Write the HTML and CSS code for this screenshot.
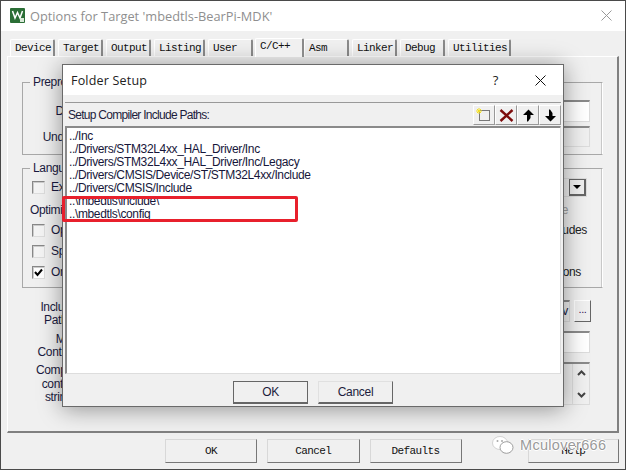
FILE: index.html
```html
<!DOCTYPE html>
<html lang="en">
<head>
<meta charset="utf-8">
<title>Options for Target</title>
<link rel="stylesheet" href="styles.css">
</head>
<body>
<div class="window">
  <header class="titlebar">
    <svg class="app-icon" width="15" height="15" viewBox="0 0 15 15">
      <rect width="15" height="15" rx="1" fill="#2b6e36"/>
      <path d="M2.500 3 L5 10 L7.500 4.500 L10 10 L12.500 3" fill="none" stroke="#fff" stroke-width="1.500"/>
      <rect x="10" y="10" width="4" height="4" fill="#d8e8d8"/>
    </svg>
    <span class="title-text">Options for Target 'mbedtls-BearPi-MDK'</span>
    <svg class="close-back" width="11" height="11" viewBox="0 0 11 11"><path d="M0.5 0.5 L10.5 10.5 M10.5 0.5 L0.5 10.5" stroke="#999" fill="none"/></svg>
  </header>
  <div class="main">
    <nav class="tabs">
      <span class="tab">Device</span>
      <span class="tab">Target</span>
      <span class="tab">Output</span>
      <span class="tab">Listing</span>
      <span class="tab tab-user">User</span>
      <span class="tab tab-active">C/C++</span>
      <span class="tab">Asm</span>
      <span class="tab">Linker</span>
      <span class="tab">Debug</span>
      <span class="tab">Utilities</span>
    </nav>
    <section class="panel">
      <fieldset class="group group-pre">
        <legend>Preprocessor Symbols</legend>
        <div class="field-grid">
          <span class="lbl">Define:</span><span class="field field-white"></span>
          <span class="lbl">Undefine:</span><span class="field"></span>
        </div>
      </fieldset>
      <fieldset class="group group-lang">
        <legend>Language / Code Generation</legend>
        <div class="check-row row-first"><span class="check"></span><span>Execute-only Code</span><span class="push"></span><span class="combo"><span class="combo-btn"></span></span></div>
        <div class="check-row plain"><span>Optimization:</span><span class="push"></span><span class="muted">Warnings: e</span></div>
        <div class="check-row"><span class="check"></span><span>Optimize for Time</span><span class="push"></span><span class="right-text">No Auto Includes</span></div>
        <div class="check-row"><span class="check"></span><span>Split Load and Store Multiple</span></div>
        <div class="check-row"><span class="check check-on"><svg width="9" height="9" viewBox="0 0 9 9"><path d="M1 4 L3.5 7 L8 1.5" fill="none" stroke="#000" stroke-width="2"/></svg></span><span>One ELF Section per Function</span><span class="push"></span><span class="right-text ext">GNU extensions</span></div>
      </fieldset>
      <div class="paths">
        <span class="plabel l1">Include<br>Paths</span>
        <div class="path-row"><span class="field field-v">v</span><span class="browse">...</span></div>
        <span class="plabel l2">&nbsp;&nbsp;&nbsp;&nbsp;&nbsp;&nbsp;Misc<br>Controls</span>
        <span class="field field-white misc"></span>
        <span class="plabel l3">Compiler<br>control<br>string</span>
        <div class="field ctrl"><span class="scroll"><svg width="9" height="6" viewBox="0 0 9 6"><path d="M1 5 L4.500 1.500 L8 5" fill="none" stroke="#444" stroke-width="2"/></svg><svg width="9" height="6" viewBox="0 0 9 6"><path d="M1 1 L4.500 4.500 L8 1" fill="none" stroke="#444" stroke-width="2"/></svg></span></div>
      </div>
    </section>
    <footer class="actions">
      <button class="btn ok">OK</button>
      <button class="btn">Cancel</button>
      <button class="btn">Defaults</button>
      <button class="btn help">Help</button>
    </footer>
  </div>

  <div class="dialog">
    <header class="dlg-title">
      <span class="dlg-name">Folder Setup</span>
      <span class="dlg-help">?</span>
      <svg class="dlg-close" width="11" height="11" viewBox="0 0 11 11"><path d="M0.5 0.5 L10.500 10.500 M10.500 0.500 L0.500 10.500" stroke="#111" fill="none"/></svg>
    </header>
    <div class="dlg-body">
      <div class="toolbar">
        <span class="tb-label">Setup Compiler Include Paths:</span>
        <span class="tb-btns">
          <span class="tb-btn"><svg width="16" height="14" viewBox="0 0 16 14"><rect x="3.500" y="2.500" width="10" height="10" fill="none" stroke="#000" stroke-dasharray="1 1"/><path d="M0 3 H6 M3 0 V6 M1 1 L5 5 M5 1 L1 5" stroke="#f4e020" fill="none"/></svg></span>
          <span class="tb-btn"><svg width="15" height="13" viewBox="0 0 15 13"><path d="M1.500 1 L13.500 12 M13.500 1 L1.500 12" stroke="#7d0c0c" stroke-width="2.400" fill="none"/></svg></span>
          <span class="tb-btn"><svg width="13" height="13" viewBox="0 0 13 13"><path d="M6.500 0.500 L12 6 H8.500 V9 L6 12.500 H5 V6 H1 Z" fill="#000"/></svg></span>
          <span class="tb-btn"><svg width="13" height="13" viewBox="0 0 13 13"><path d="M6.500 12.500 L12 7 H8.500 V4 L6 0.500 H5 V7 H1 Z" fill="#000"/></svg></span>
        </span>
      </div>
      <ul class="path-list">
        <li>../Inc</li>
        <li>../Drivers/STM32L4xx_HAL_Driver/Inc</li>
        <li>../Drivers/STM32L4xx_HAL_Driver/Inc/Legacy</li>
        <li>../Drivers/CMSIS/Device/ST/STM32L4xx/Include</li>
        <li>../Drivers/CMSIS/Include</li>
        <li>..\mbedtls\include\</li>
        <li>..\mbedtls\config</li>
      </ul>
      <div class="dlg-actions">
        <button class="dbtn">OK</button>
        <button class="dbtn">Cancel</button>
      </div>
    </div>
  </div>

  <div class="highlight"></div>

  <div class="watermark">
    <svg width="22" height="20" viewBox="0 0 22 20">
      <ellipse cx="8" cy="8" rx="7.500" ry="6.500" fill="#fff" stroke="#bbb" stroke-width="0.600"/>
      <ellipse cx="14.500" cy="12.500" rx="6.500" ry="5.800" fill="#fff" stroke="#888" stroke-width="0.800"/>
      <circle cx="5.500" cy="6" r="1" fill="#aaa"/><circle cx="10" cy="6" r="1" fill="#aaa"/>
    </svg>
    <span class="wm-text">Mculover666</span>
  </div>
</div>
</body>
</html>
```
FILE: styles.css
```css
* { box-sizing: border-box; }
html, body { margin: 0; padding: 0; }
body { width: 626px; height: 470px; overflow: hidden; font-family: "Liberation Sans", Arial, sans-serif; font-size: 12px; letter-spacing: -.35px; color: #1a1a40; }

.window { position: relative; width: 626px; height: 470px; border: 1px solid #4a4a4a; background: #f0f0f0; overflow: hidden; display: flex; flex-direction: column; }

.titlebar { height: 30px; background: #fff; display: flex; align-items: center; padding: 0 12px 1px 9px; flex: none; }
.app-icon { flex: none; }
.title-text { margin-left: 5px; font-family: "Open Sans", sans-serif; font-size: 12.800px; color: #8f8f8f; letter-spacing: 0; }
.close-back { margin-left: auto; margin-right: 1px; }

.main { flex: 1; display: flex; flex-direction: column; padding: 0 6px; min-height: 0; }

.tabs { display: flex; height: 25px; padding-left: 3px; align-items: flex-end; flex: none; }
.tab { height: 17px; min-width: 45px; margin-right: 3px; padding: 0 2px 0 4px; border-top: 1px solid #fff; border-left: 1px solid #fff; border-right: 2px solid #8a8a8a; border-radius: 2px 2px 0 0; font-family: "Liberation Mono", monospace; font-size: 11px; letter-spacing: -.6px; line-height: 16px; color: #111; white-space: nowrap; }
.tab-active { height: 19px; min-width: 49px; margin-right: 0; margin-left: -1px; line-height: 15px; background: #f0f0f0; position: relative; top: 1px; z-index: 1; }

.panel { height: 377px; border-top: 1px solid #fff; border-left: 1px solid #fff; border-right: 2px solid #808080; border-bottom: 2px solid #808080; padding: 18px 14px 0; flex: none; }

.group { margin: 0 0 6px; padding: 0; border: 1px solid #a8a8a8; border-right-color: #fff; box-shadow: inset -1px 0 0 #c8c8c8; min-width: 0; position: relative; }
.group legend { margin-left: 7px; padding: 0 3px; line-height: 14px; height: 14px; white-space: nowrap; }
.group-pre { height: 80px; }
.group-lang { height: 127px; margin-bottom: 13px; padding-top: 2px; padding-left: 10px; padding-right: 15px; }
.group-lang legend { margin-left: -3px; }

.field-grid { display: grid; grid-template-columns: 70px 1fr; grid-template-rows: 22px 21px; row-gap: 4px; align-items: center; padding: 11px 12px 0 0; }
.lbl { text-align: right; padding-right: 2px; }
.field { display: block; height: 100%; border: 1px solid #dcdcdc; border-top: 2px solid #8a8a8a; border-left: 2px solid #8a8a8a; background: #f0f0f0; }
.field-white { background: #fff; }

.check-row { display: flex; align-items: center; height: 20px; gap: 6px; margin-bottom: 1px; white-space: nowrap; }
.row-first { margin-bottom: 3px; }
.push { flex: 1; }
.check { width: 13px; height: 13px; flex: none; margin-left: -1px; border: 1px solid #888; border-right-color: #ddd; border-bottom-color: #ddd; background: #f4f4f4; display: flex; align-items: center; justify-content: center; box-shadow: inset 1px 1px 0 #ccc; }
.check-on { background: #fff; }
.plain { margin-left: -3px; margin-bottom: 0; }
.muted { color: #a0a0a0; margin-right: 19px; }
.right-text { color: #222; }
.ext { margin-right: 6px; }
.combo { width: 120px; height: 19px; display: flex; justify-content: flex-end; border: 1px solid #ddd; }
.combo-btn { width: 17px; height: 17px; border: 1px solid #666; border-right-width: 2px; border-bottom-width: 2px; position: relative; background: #f0f0f0; }
.combo-btn::after { content: ""; position: absolute; left: 3px; top: 5px; border: 4px solid transparent; border-top: 4px solid #000; border-bottom: 0; }

.paths { display: grid; grid-template-columns: 65px 1fr; grid-template-rows: 22px 22px 43px; row-gap: 9px; padding: 0 13px 0 4px; margin-top: -1px; }
.plabel { text-align: center; line-height: 13px; white-space: nowrap; }
.l1 { margin-top: 1px; }
.l2 { margin-top: 2px; }
.l3 { line-height: 13.500px; margin-top: 2px; }
.path-row { display: flex; gap: 4px; height: 22px; }
.field-v { flex: 1; text-align: right; padding-right: 1px; line-height: 18px; }
.browse { width: 17px; margin-right: -1px; height: 22px; border: 1px solid #fff; border-right: 1px solid #666; border-bottom: 1px solid #666; text-align: center; line-height: 16px; color: #331155; font-size: 11px; }
.ctrl { position: relative; }
.scroll { position: absolute; top: 0; right: 0; bottom: 0; width: 17px; border-left: 1px solid #ddd; display: flex; flex-direction: column; justify-content: space-between; align-items: center; padding: 6px 0; }

.actions { display: flex; gap: 10px; padding: 6px 0 0 158px; }
.btn { width: 93px; height: 24px; padding: 0; border: 1px solid #fff; border-top-color: #d8d8d8; border-left-color: #d8d8d8; border-right: 1px solid #777; border-bottom: 1px solid #777; background: #f0f0f0; font-family: "Liberation Mono", monospace; font-size: 11px; letter-spacing: -.6px; color: #111; }
.help { margin-left: 56px; width: 92px; }

.dialog { position: absolute; left: 61px; top: 63px; width: 502px; height: 343px; border: 1px solid #6a6a6a; background: #f0f0f0; box-shadow: 0 2px 22px rgba(0,0,0,.4); display: flex; flex-direction: column; }
.dlg-title { height: 30px; background: #fff; display: flex; align-items: center; padding-left: 8px; flex: none; }
.dlg-name { font-family: "Open Sans", sans-serif; font-size: 12.500px; color: #222; letter-spacing: .2px; }
.dlg-help { margin-left: auto; font-family: "Open Sans", sans-serif; font-size: 13px; color: #222; }
.dlg-close { margin: 0 17px 0 37px; }
.dlg-body { flex: 1; display: flex; flex-direction: column; padding: 7px 2px 0; min-height: 0; }

.toolbar { height: 24px; flex: none; border-top: 1px solid #999; display: flex; align-items: center; padding-left: 3px; }
.tb-label { color: #1c1c3c; letter-spacing: -.72px; }
.tb-btns { margin-left: auto; display: flex; margin-top: 1px; }
.tb-btn { width: 22px; height: 20px; border: 1px solid #fff; border-right-color: #999; border-bottom-color: #999; display: flex; align-items: center; justify-content: center; }

.path-list { list-style: none; margin: 0; padding: 2px 2px; height: 248px; flex: none; background: #fff; border: 2px solid #8a8a8a; border-right: 1px solid #ddd; border-bottom: 1px solid #ddd; }
.path-list li { height: 13px; line-height: 13px; color: #16163a; white-space: nowrap; letter-spacing: -.36px; }

.dlg-actions { display: flex; gap: 10px; padding: 7px 0 0 168px; }
.dbtn { width: 75px; height: 23px; padding: 0; border: 1px solid #fff; border-top-color: #e0e0e0; border-left-color: #e0e0e0; border-right: 1px solid #666; border-bottom: 2px solid #666; background: #f0f0f0; font-family: "Liberation Sans", sans-serif; font-size: 12px; letter-spacing: -.3px; color: #1c1c3c; }
.dbtn:first-child { border-top-color: #666; border-left-color: #666; }

.highlight { position: absolute; left: 61px; top: 195px; width: 236px; height: 26px; border: 3px solid #e8202c; border-radius: 2px; }

.watermark { position: absolute; left: 491px; top: 434px; display: flex; align-items: center; gap: 6px; }
.wm-text { font-family: "Liberation Sans", sans-serif; font-size: 14.500px; letter-spacing: .3px; color: #9a9a9a; text-shadow: 1px 0 0 #fff, -1px 0 0 #fff, 0 1px 0 #fff, 0 -1px 0 #fff; }
```
